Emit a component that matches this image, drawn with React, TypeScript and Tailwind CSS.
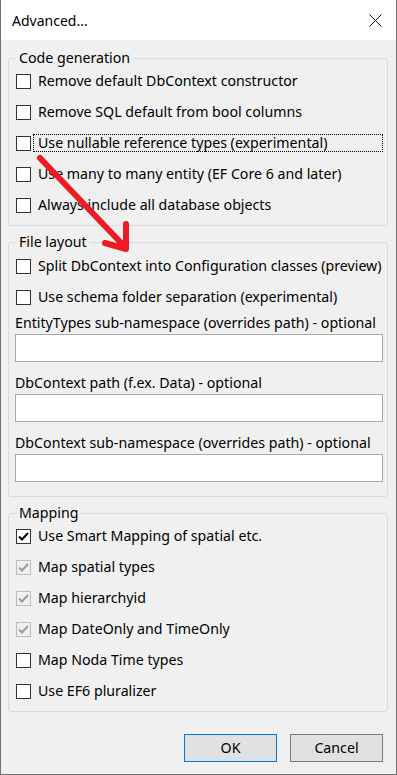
import React from "react";

type BoxState = "off" | "on" | "dis";

const FONT = { fontFamily: '"Noto Sans", "Liberation Sans", sans-serif' };

function Box({ state }: { state: BoxState }) {
  const frame =
    state === "dis"
      ? "border-[#bcbcbc] bg-[#f0f0f0]"
      : "border-[#333333] bg-white";
  return (
    <span className={"ml-px flex h-[15px] w-[15px] shrink-0 items-center justify-center border " + frame}>
      {state !== "off" && (
        <svg width="13" height="13" viewBox="0 0 13 13">
          <path
            d="M2 6.5 L5 9.5 L11 3"
            fill="none"
            stroke={state === "on" ? "#000" : "#9a9a9a"}
            strokeWidth="2"
          />
        </svg>
      )}
    </span>
  );
}

function CheckRow({ label, state = "off", focused = false }: { label: string; state?: BoxState; focused?: boolean }) {
  return (
    <div className="flex h-[20px] items-center">
      <Box state={state} />
      <span
        className={
          "ml-[2px] border px-[4px] leading-[16px] whitespace-nowrap " +
          (focused ? "w-[350px] border-dotted border-black" : "border-transparent")
        }
      >
        {label}
      </span>
    </div>
  );
}

function Field({ label, first = false }: { label: string; first?: boolean }) {
  return (
    <div className={first ? "mt-[6px]" : "mt-[11px]"}>
      <div className="h-[20px] leading-[20px] whitespace-nowrap">{label}</div>
      <div className="mt-px h-[28px] w-full border border-[#a9a9a9] bg-white" />
    </div>
  );
}

function Group({ title, className = "", children }: { title: string; className?: string; children: React.ReactNode }) {
  return (
    <fieldset className={"min-w-0 rounded-[3px] border border-[#d5dde3] pl-[6px] pr-[4px] " + className}>
      <legend className="ml-px px-[3px] leading-[20px]">{title}</legend>
      {children}
    </fieldset>
  );
}

export default function App() {
  return (
    <div
      className="relative flex h-[775px] w-[397px] flex-col border-x border-b border-[#707070] text-[14.2px] text-black"
      style={FONT}
    >
      {/* title bar */}
      <div className="flex h-[40px] shrink-0 items-center justify-between bg-white pl-[11px] pr-[14px]">
        <span className="text-[14px]">Advanced...</span>
        <svg width="13" height="13" viewBox="0 0 13 13">
          <path d="M0.5 0.5 L12.5 12.5 M12.5 0.5 L0.5 12.5" stroke="#111" strokeWidth="1" fill="none" />
        </svg>
      </div>

      <div className="flex flex-1 flex-col bg-[#f0f0f0] pl-[7px] pr-[8px] pt-[8px]">
        <Group title="Code generation">
          <div className="flex flex-col gap-[11px] pb-[10px] pt-[3px]">
            <CheckRow label="Remove default DbContext constructor" />
            <CheckRow label="Remove SQL default from bool columns" />
            <CheckRow label="Use nullable reference types (experimental)" focused />
            <CheckRow label="Use many to many entity (EF Core 6 and later)" />
            <CheckRow label="Always include all database objects" />
          </div>
        </Group>

        <Group title="File layout" className="mt-[6px]">
          <div className="pb-[14px] pt-[4px]">
            <div className="flex flex-col gap-[11px]">
              <CheckRow label="Split DbContext into Configuration classes (preview)" />
              <CheckRow label="Use schema folder separation (experimental)" />
            </div>
            <Field label="EntityTypes sub-namespace (overrides path) - optional" first />
            <Field label="DbContext path (f.ex. Data) - optional" />
            <Field label="DbContext sub-namespace (overrides path) - optional" />
          </div>
        </Group>

        <Group title="Mapping" className="mt-[6px]">
          <div className="flex flex-col gap-[11px] pb-[10px] pt-[3px]">
            <CheckRow label="Use Smart Mapping of spatial etc." state="on" />
            <CheckRow label="Map spatial types" state="dis" />
            <CheckRow label="Map hierarchyid" state="dis" />
            <CheckRow label="Map DateOnly and TimeOnly" state="dis" />
            <CheckRow label="Map Noda Time types" />
            <CheckRow label="Use EF6 pluralizer" />
          </div>
        </Group>

        <div className="mt-[22px] flex justify-end gap-[13px] pr-[5px]">
          <button className="h-[28px] w-[93px] border border-[#0078d7] bg-[#e1e1e1] leading-[20px]">OK</button>
          <button className="h-[28px] w-[93px] border border-[#7a7a7a] bg-[#e1e1e1] leading-[20px]">Cancel</button>
        </div>
      </div>

      {/* red annotation arrow drawn over the dialog */}
      <svg className="pointer-events-none absolute left-0 top-0" width="140" height="260" viewBox="0 0 140 260">
        <path d="M39 158 L123 246" stroke="#ed1c24" strokeWidth="6" strokeLinecap="round" fill="none" />
        <path d="M125 224 L125 249 L104 243" stroke="#ed1c24" strokeWidth="6" strokeLinecap="round" strokeLinejoin="round" fill="none" />
      </svg>
    </div>
  );
}
